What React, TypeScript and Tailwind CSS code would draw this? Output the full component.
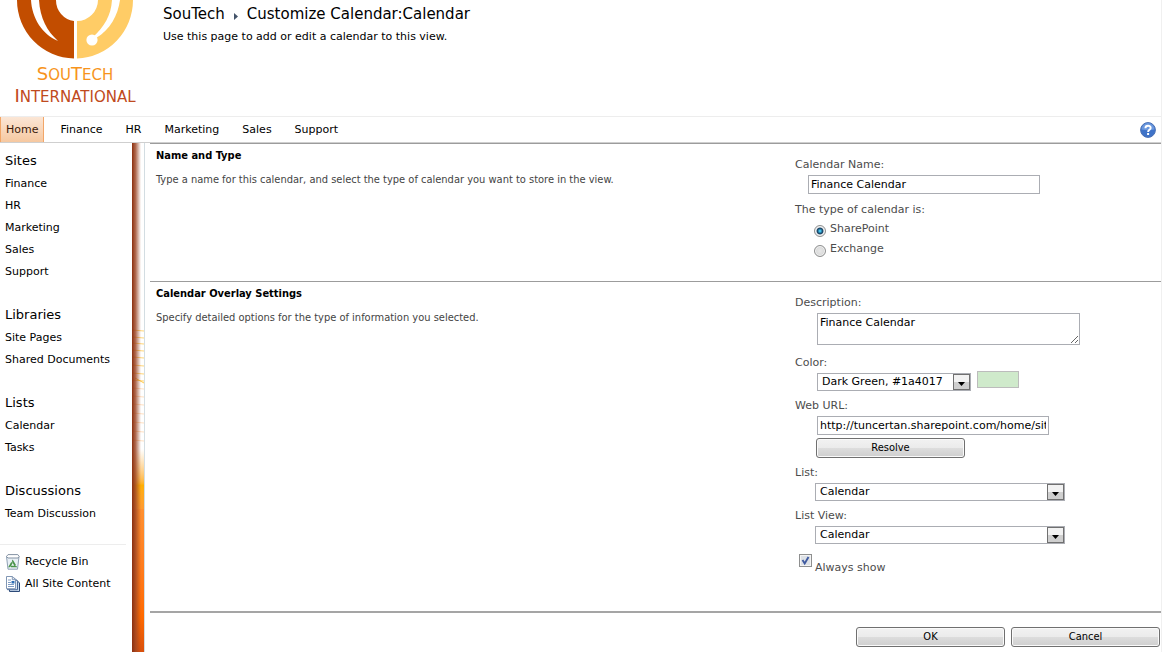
import type { ReactNode } from "react";
import { useState } from "react";
import clsx from "clsx";

const NAV = ["Home", "Finance", "HR", "Marketing", "Sales", "Support"];

const GROUPS = [
  { title: "Sites", items: ["Finance", "HR", "Marketing", "Sales", "Support"] },
  { title: "Libraries", items: ["Site Pages", "Shared Documents"] },
  { title: "Lists", items: ["Calendar", "Tasks"] },
  { title: "Discussions", items: ["Team Discussion"] },
];

const GRID_LINES = [1, 8, 14, 21, 28, 36, 44, 51, 59, 67, 75, 84, 93, 102, 111];

function Logo() {
  return (
    <a
      href="#"
      className="flex w-[154px] shrink-0 flex-col items-center pr-1 font-['DejaVu_Sans',sans-serif] text-[15px] leading-6"
    >
      <svg viewBox="0 0 116 59" className="block h-[59px] w-[116px]" aria-hidden="true">
        <path d="M0 0A58 58.5 0 0 0 57 58.5V21A21 21 0 0 1 39 0Z" fill="#c24d00" />
        <path d="M116 0A58 58.5 0 0 1 60 58.5V21A21 21 0 0 0 81 0Z" fill="#fc6" />
        <path d="M14 0C15 18 25 34 41 41C30 31 23 18 22 0Z" fill="#fff" />
        <path d="M103 0C101 15 93 30 79 38L76 37C87 27 94 16 95 0Z" fill="#fff" />
        <circle cx="75" cy="40" r="5.6" fill="#fff" />
      </svg>
      <span className="mt-[3px] h-[22px] text-[#f7941c]">
        <span className="text-[18px]">S</span>OU<span className="text-[18px]">T</span>ECH
      </span>
      <span className="h-[22px] text-[#bf4a20]">
        <span className="text-[18px]">I</span>NTERNATIONAL
      </span>
    </a>
  );
}

function RecycleIcon() {
  return (
    <svg viewBox="0 0 16 16" className="size-4" aria-hidden="true">
      <path d="M1.5 2.5 3 15.2h9.5L14 2.5Z" fill="#e9f0f6" stroke="#8ea0b4" />
      <path d="M1.5 2.5 3 .6h9.8L14.2 2.5 13 4H3Z" fill="#fff" stroke="#8492a4" />
      <path d="M7.7 7.2 10.8 12.5H4.6Z" fill="none" stroke="#4a934a" strokeWidth="1.7" strokeDasharray="5 1" />
    </svg>
  );
}

function ContentIcon() {
  return (
    <svg viewBox="0 0 16 16" className="size-4" aria-hidden="true">
      <path d="M4.5 4h7l3 3v8.5h-10Z" fill="#c9d9ea" stroke="#2c4a78" />
      <path d="M2.5 2.2h7l3 3v8.5h-10Z" fill="#dce7f3" stroke="#4a6896" />
      <path d="M1.5.5h5.8l3.2 3.2v9h-9Z" fill="#fff" stroke="#8096b4" />
      <path d="M7.3.5v3.2h3.2" fill="none" stroke="#8096b4" />
      <path d="M3 4h3M3 6.5h3M3 8.5h6M3 10.5h6" stroke="#7f9cc4" />
      <path d="M6.5 5h3v2.5h-3Z" fill="#2c6cb4" />
    </svg>
  );
}

function HelpIcon() {
  return (
    <svg viewBox="0 0 16 16" className="size-4" aria-hidden="true">
      <circle cx="8" cy="8" r="7.4" fill="#3f73c8" stroke="#4a70b4" />
      <path d="M1.5 7.5a6.5 6.5 0 0 1 13 0Q8 9 1.5 7.5Z" fill="#6b98de" />
      <path d="M5.4 6.2C5.4 2.8 10.7 3 10.7 6c0 1.8-2.6 1.9-2.6 3.9" fill="none" stroke="#fff" strokeWidth="1.9" />
      <rect x="7.1" y="11" width="2" height="2" fill="#fff" />
    </svg>
  );
}

// Decorative bar between the quick launch and the page body.
function SideStrip() {
  return (
    <div className="relative w-[13px] shrink-0 overflow-hidden border-r border-[#d3dde2]" aria-hidden="true">
      <div className="flex h-full flex-col">
        <div className="h-[186px]" />
        <svg viewBox="0 0 12 120" className="block h-[120px] w-3">
          {GRID_LINES.map((y, i) => (
            <path key={y} d={`M0 ${y}L12 ${y + 1}`} stroke={i < 8 ? "#ffd577" : "#ffdfc0"} />
          ))}
          <path d="M3 49 12 54" stroke="#ffc94a" />
        </svg>
        <div className="h-[60px] bg-linear-to-b from-white via-[#ffb000] via-60% to-[#ff9a30]" />
        <div className="flex-1 bg-linear-to-b from-[#ff9030] via-[#ff6a00] via-75% to-[#d9500c]" />
      </div>
      <div className="absolute inset-0 bg-linear-to-r from-[#8c2f0e] via-[#9c4524]/80 via-30% to-transparent to-75%" />
    </div>
  );
}

function Section({ title, text, className, children }: { title: string; text: string; className: string; children: ReactNode }) {
  return (
    <section className={clsx("flex border-t border-[#9c9c9c]", className)}>
      <div className="min-w-0 flex-1 pt-[3px] pl-[6px] font-['DejaVu_Sans_Condensed','DejaVu_Sans',sans-serif]">
        <h2 className="text-[11px] leading-[18px] font-bold text-black">{title}</h2>
        <p className="mt-1.5 text-[11px] leading-[18px] text-[#444]">{text}</p>
      </div>
      <div className="w-[366px] shrink-0 pt-3">{children}</div>
    </section>
  );
}

function Select({ id, options, className }: { id: string; options: string[]; className: string }) {
  return (
    <div className={clsx("relative h-[18px]", className)}>
      <select
        id={id}
        className="block h-full w-full appearance-none border border-[#abadb3] bg-white pl-1 text-[11px] leading-4 text-black outline-none"
      >
        {options.map((o) => (
          <option key={o}>{o}</option>
        ))}
      </select>
      <span className="pointer-events-none absolute top-px right-px flex h-4 w-[17px] items-end justify-center border border-[#707070] bg-linear-to-b from-[#f2f2f2] from-50% to-[#cfcfcf] to-50% pb-[3px]">
        <svg viewBox="0 0 7 4" className="h-1 w-[7px]" aria-hidden="true">
          <path d="M0 0h7L3.5 4Z" fill="#000" />
        </svg>
      </span>
    </div>
  );
}

function Button({ children }: { children: ReactNode }) {
  return (
    <button
      type="button"
      className="block h-5 w-[149px] rounded-[3px] border border-[#707070] bg-[linear-gradient(#f2f2f2,#ebebeb_50%,#dddddd_50%,#cfcfcf)] font-['DejaVu_Sans_Condensed','DejaVu_Sans',sans-serif] text-[11px] leading-4 text-black shadow-[inset_0_0_0_1px_#fafafa]"
    >
      {children}
    </button>
  );
}

export default function App() {
  const [name, setName] = useState("Finance Calendar");
  const [kind, setKind] = useState("SharePoint");
  const [always, setAlways] = useState(true);

  return (
    <div className="flex min-h-screen flex-col border-r border-[#f0f0f0] bg-white font-['DejaVu_Sans',Verdana,sans-serif] text-[11px] text-black">
      <header className="flex pb-2.5">
        <Logo />
        <div className="pt-1 pl-[9px]">
          <h1 className="flex items-center text-[15px] leading-5">
            <a href="#">SouTech</a>
            <svg viewBox="0 0 4 7" className="mx-[9px] mt-1 h-[7px] w-1" aria-hidden="true">
              <path d="M0 0 4 3.5 0 7Z" fill="#44546a" />
            </svg>
            Customize Calendar:Calendar
          </h1>
          <p className="mt-1 leading-[18px]">Use this page to add or edit a calendar to this view.</p>
        </div>
      </header>

      <nav className="flex h-[27px] items-center gap-px border-t border-b border-t-[#ededed] border-b-[#cfcfcf] pr-[5px]">
        {NAV.map((item) => (
          <a
            key={item}
            href="#"
            className={clsx(
              "h-full leading-[25px]",
              item === "Home"
                ? "mr-1 border-x border-[#f2a668] bg-linear-to-b from-[#fbe6d6] to-[#f6c8a0] px-[5px] text-[#3b1a0a]"
                : "px-[11px]",
            )}
          >
            {item}
          </a>
        ))}
        <button type="button" aria-label="Help" className="ml-auto">
          <HelpIcon />
        </button>
      </nav>

      <div className="flex flex-1">
        <aside className="w-[132px] shrink-0 pt-1.5">
          <div className="flex flex-col gap-5 pb-[19px] pl-[5px]">
            {GROUPS.map((g) => (
              <div key={g.title}>
                <h2 className="text-[13px] leading-6">{g.title}</h2>
                <ul>
                  {g.items.map((item) => (
                    <li key={item} className="leading-[22px] whitespace-nowrap">
                      <a href="#">{item}</a>
                    </li>
                  ))}
                </ul>
              </div>
            ))}
          </div>
          <div className="mr-1.5 border-t border-[#ededed] pt-1.5 pl-[5px] leading-[22px] whitespace-nowrap">
            <a href="#" className="flex items-center gap-1">
              <RecycleIcon />
              Recycle Bin
            </a>
            <a href="#" className="flex items-center gap-1">
              <ContentIcon />
              All Site Content
            </a>
          </div>
        </aside>

        <SideStrip />

        <main className="min-w-0 flex-1 pl-[5px] text-[#4c4c4c]">
          <Section
            title="Name and Type"
            text="Type a name for this calendar, and select the type of calendar you want to store in the view."
            className="pb-[22px]"
          >
            <label htmlFor="name" className="block leading-[18px]">
              Calendar Name:
            </label>
            <input
              id="name"
              value={name}
              onChange={(e) => setName(e.target.value)}
              className="mt-px ml-[13px] block h-[19px] w-[232px] border border-[#abadb3] px-0.5 text-black outline-none"
            />
            <fieldset className="mt-[7px]">
              <legend className="leading-[18px]">The type of calendar is:</legend>
              {["SharePoint", "Exchange"].map((k) => (
                <label key={k} className="ml-[19px] flex h-5 items-center gap-1 leading-5">
                  <input
                    type="radio"
                    name="kind"
                    checked={kind === k}
                    onChange={() => setKind(k)}
                    className="mt-1 size-3 appearance-none rounded-full border border-[#8e8f8f] bg-radial from-[#e8e8e8] to-[#cfd0d0] shadow-[inset_0_0_0_1px_#f4f4f4] checked:from-[#45c3ee] checked:from-10% checked:via-[#123c5e] checked:via-40% checked:to-[#dfe3e6] checked:to-55%"
                  />
                  {k}
                </label>
              ))}
            </fieldset>
          </Section>

          <Section
            title="Calendar Overlay Settings"
            text="Specify detailed options for the type of information you selected."
            className="pb-[35px]"
          >
            <label htmlFor="description" className="block leading-[18px]">
              Description:
            </label>
            <textarea
              id="description"
              defaultValue="Finance Calendar"
              className="mt-px ml-[22px] block h-8 w-[263px] resize border border-[#abadb3] px-0.5 py-px leading-4 text-black outline-none"
            />
            <label htmlFor="color" className="mt-[9px] block leading-[18px]">
              Color:
            </label>
            <div className="mt-px ml-[22px] flex items-start gap-1.5">
              <Select id="color" options={["Dark Green, #1a4017"]} className="w-[154px]" />
              <span className="-mt-0.5 h-[17px] w-[42px] border border-[#bcbcbc] bg-[#cfeacb]" />
            </div>
            <label htmlFor="url" className="mt-1.5 block leading-[18px]">
              Web URL:
            </label>
            <input
              id="url"
              defaultValue="http://tuncertan.sharepoint.com/home/sites/finance"
              className="mt-px ml-[22px] block h-[19px] w-[232px] border border-[#abadb3] px-0.5 text-black outline-none"
            />
            <div className="mt-[3px] ml-[21px]">
              <Button>Resolve</Button>
            </div>
            <label htmlFor="list" className="mt-1.5 block leading-[18px]">
              List:
            </label>
            <Select id="list" options={["Calendar", "Tasks"]} className="mt-px ml-5 w-[250px]" />
            <label htmlFor="view" className="mt-1.5 block leading-[18px]">
              List View:
            </label>
            <Select id="view" options={["Calendar", "All Events"]} className="mt-px ml-5 w-[250px]" />
            <label className="mt-2.5 ml-1 flex items-start gap-[3px]">
              <span className="relative block size-[13px]">
                <input
                  type="checkbox"
                  checked={always}
                  onChange={(e) => setAlways(e.target.checked)}
                  className="block size-[13px] appearance-none border border-[#8e8f8f] bg-[#dde1e6] shadow-[inset_0_0_0_1px_#f4f4f4]"
                />
                {always ? (
                  <svg viewBox="0 0 13 13" className="pointer-events-none absolute inset-0 size-[13px]" aria-hidden="true">
                    <path d="M3.5 6 5.7 9.5 9.5 3" fill="none" stroke="#3f5aa0" strokeWidth="1.9" />
                  </svg>
                ) : null}
              </span>
              <span className="pt-1.5 leading-4">Always show</span>
            </label>
          </Section>

          <div className="flex justify-end gap-1.5 border-t-2 border-[#a5a5a5] pt-3.5 pr-px pb-1">
            <Button>OK</Button>
            <Button>Cancel</Button>
          </div>
        </main>
      </div>
    </div>
  );
}
